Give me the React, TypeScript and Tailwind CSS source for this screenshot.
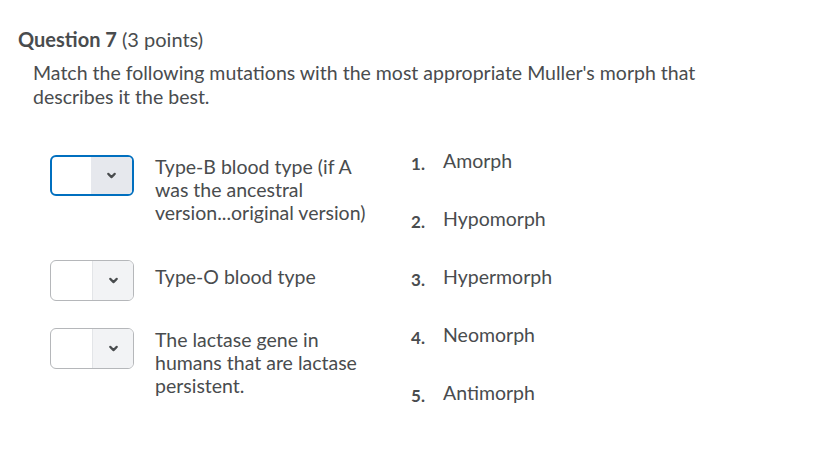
import { ChevronDown } from 'lucide-react'

const rows = [
  { text: 'Type-B blood type (if A was the ancestral version...original version)', focused: true, rowGap: '', textTop: 'mt-0' },
  { text: 'Type-O blood type', focused: false, rowGap: 'mt-[36px]', textTop: 'mt-[5px]' },
  { text: 'The lactase gene in humans that are lactase persistent.', focused: false, rowGap: 'mt-[27px]', textTop: 'mt-0' },
]

const choices = ['Amorph', 'Hypomorph', 'Hypermorph', 'Neomorph', 'Antimorph']

function SelectBox({ focused }: { focused: boolean }) {
  return (
    <div
      className={`flex h-[41px] w-[84px] shrink-0 overflow-hidden rounded-[6px] bg-white ${
        focused ? 'border-2 border-[#006fbf]' : 'border border-[#b5b7ba]'
      }`}
    >
      <div className="flex-1" />
      <div
        className={`flex w-[41px] items-center justify-center ${
          focused ? 'bg-[#e6e8ed]' : 'border-l border-[#e3e5e8] bg-[#f2f3f5]'
        }`}
      >
        <ChevronDown className="h-[13px] w-[13px] text-[#494c4e]" strokeWidth={4} />
      </div>
    </div>
  )
}

export default function App() {
  return (
    <div className="min-h-screen bg-white text-[#494c4e]" style={{ fontFamily: 'Lato, "Noto Sans", sans-serif' }}>
      <div className="px-[18px] pt-[27px]">
        <h2 className="text-[20px] leading-[24px]">
          <span className="font-bold">Question 7</span> (3 points)
        </h2>

        <p className="mt-[10px] pl-[15px] text-[19.5px] leading-[24px]">
          Match the following mutations with the most appropriate Muller's morph that
          <br />
          describes it the best.
        </p>

        <div className="mt-[46px] flex pl-[32px]">
          {/* Left: selects */}
          <div className="flex w-[361px] flex-col">
            {rows.map((row, i) => (
              <div key={i} className={`flex items-start ${row.rowGap}`}>
                <SelectBox focused={row.focused} />
                <div className={`ml-[21px] w-[215px] text-[19.5px] leading-[23px] ${row.textTop}`}>{row.text}</div>
              </div>
            ))}
          </div>

          {/* Right: choices */}
          <ol className="mt-[-6px] flex flex-col">
            {choices.map((c, i) => (
              <li key={c} className="flex h-[58px] items-start">
                <span className="mt-[3px] w-[32px] text-[17px] font-bold leading-[23px]">{i + 1}.</span>
                <span className="text-[19.5px] leading-[23px]">{c}</span>
              </li>
            ))}
          </ol>
        </div>
      </div>
    </div>
  )
}
